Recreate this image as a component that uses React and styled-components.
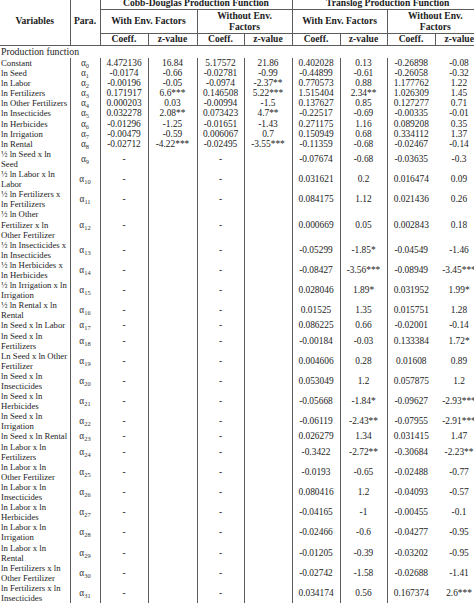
import React from 'react'
import styled, { createGlobalStyle } from 'styled-components'

const GlobalStyle = createGlobalStyle`
  html, body {
    margin: 0;
    padding: 0;
    background: #fff;
  }
  body {
    font-family: "Liberation Serif", "Times New Roman", serif;
    color: #1c1c1c;
  }
`

const LINE = '#5c5c5c'
// column widths, left to right (the last one runs past the window)
const COLS = [70, 30, 48, 49, 47, 48, 48, 47, 48, 48]

const Frame = styled.div`
  width: 474px;
  height: 603px;
  overflow: hidden;
`

const Table = styled.table`
  border-collapse: collapse;
  table-layout: fixed;
  width: ${COLS.reduce((a, b) => a + b, 0)}px;
  margin-top: -2px;
  font-size: 9.4px;
  line-height: 10.1px;
`

const HeadCell = styled.th`
  font-weight: bold;
  font-size: 9.6px;
  text-align: center;
  vertical-align: middle;
  padding: 0;
  height: ${(p) => p.$h || 10}px;
  border-left: ${(p) => (p.$noLeft ? 'none' : `1px solid ${LINE}`)};
  border-bottom: 1px solid ${LINE};
  white-space: nowrap;
`

const SectionCell = styled.td`
  text-align: left;
  padding: 1px 0 0 1px;
  height: 11px;
  font-size: 9.8px;
  vertical-align: middle;
`

const VarCell = styled.td`
  text-align: left;
  padding: 0 0 0 1px;
  font-size: 8.7px;
  vertical-align: middle;
  white-space: nowrap;
`

const ParaCell = styled.td`
  text-align: center;
  vertical-align: middle;
  padding: 0;
  border-left: 1px solid ${LINE};
  color: #333;
`

const Sub = styled.sub`
  font-size: 6.4px;
  vertical-align: -2px;
  line-height: 0;
`

const NumCell = styled.td`
  text-align: center;
  vertical-align: middle;
  padding: 0;
  white-space: nowrap;
  border-left: ${(p) => (p.$noLeft ? 'none' : `1px solid ${LINE}`)};
`

const single = [
  ['ln Seed', 1, ['-0.0174', '-0.66', '-0.02781', '-0.99', '-0.44899', '-0.61', '-0.26058', '-0.32']],
  ['ln Labor', 2, ['-0.00196', '-0.05', '-0.0974', '-2.37**', '0.770573', '0.88', '1.177762', '1.22']],
  ['ln Fertilizers', 3, ['0.171917', '6.6***', '0.146508', '5.22***', '1.515404', '2.34**', '1.026309', '1.45']],
  ['ln Other Fertilizers', 4, ['0.000203', '0.03', '-0.00994', '-1.5', '0.137627', '0.85', '0.127277', '0.71']],
  ['ln Insecticides', 5, ['0.032278', '2.08**', '0.073423', '4.7**', '-0.22517', '-0.69', '-0.00335', '-0.01']],
  ['ln Herbicides', 6, ['-0.01296', '-1.25', '-0.01651', '-1.43', '0.271175', '1.16', '0.089208', '0.35']],
  ['ln Irrigation', 7, ['-0.00479', '-0.59', '0.006067', '0.7', '0.150949', '0.68', '0.334112', '1.37']],
  ['ln Rental', 8, ['-0.02712', '-4.22***', '-0.02495', '-3.55***', '-0.11359', '-0.68', '-0.02467', '-0.14']],
]

const translogOnly = [
  [['½ ln Seed x ln', 'Seed'], 9, ['-0.07674', '-0.68', '-0.03635', '-0.3']],
  [['½ ln Labor x ln', 'Labor'], 10, ['0.031621', '0.2', '0.016474', '0.09']],
  [['½ ln Fertilizers x', 'ln Fertilizers'], 11, ['0.084175', '1.12', '0.021436', '0.26']],
  [['½ ln Other', 'Fertilizer x ln', 'Other Fertilizer'], 12, ['0.000669', '0.05', '0.002843', '0.18']],
  [['½ ln Insecticides x', 'ln Insecticides'], 13, ['-0.05299', '-1.85*', '-0.04549', '-1.46']],
  [['½ ln Herbicides x', 'ln Herbicides'], 14, ['-0.08427', '-3.56***', '-0.08949', '-3.45***']],
  [['½ ln Irrigation x ln', 'Irrigation'], 15, ['0.028046', '1.89*', '0.031952', '1.99*']],
  [['½ ln Rental x ln', 'Rental'], 16, ['0.01525', '1.35', '0.015751', '1.28']],
  [['ln Seed x ln Labor'], 17, ['0.086225', '0.66', '-0.02001', '-0.14']],
  [['ln Seed x ln', 'Fertilizers'], 18, ['-0.00184', '-0.03', '0.133384', '1.72*']],
  [['Ln Seed x ln Other', 'Fertilizer'], 19, ['0.004606', '0.28', '0.01608', '0.89']],
  [['ln Seed x ln', 'Insecticides'], 20, ['0.053049', '1.2', '0.057875', '1.2']],
  [['ln Seed x ln', 'Herbicides'], 21, ['-0.05668', '-1.84*', '-0.09627', '-2.93***']],
  [['ln Seed x ln', 'Irrigation'], 22, ['-0.06119', '-2.43**', '-0.07955', '-2.91***']],
  [['ln Seed x ln Rental'], 23, ['0.026279', '1.34', '0.031415', '1.47']],
  [['ln Labor x ln', 'Fertilizers'], 24, ['-0.3422', '-2.72**', '-0.30684', '-2.23**']],
  [['ln Labor x ln', 'Other Fertilizer'], 25, ['-0.0193', '-0.65', '-0.02488', '-0.77']],
  [['ln Labor x ln', 'Insecticides'], 26, ['0.080416', '1.2', '-0.04093', '-0.57']],
  [['ln Labor x ln', 'Herbicides'], 27, ['-0.04165', '-1', '-0.00455', '-0.1']],
  [['ln Labor x ln', 'Irrigation'], 28, ['-0.02466', '-0.6', '-0.04277', '-0.95']],
  [['ln Labor x ln', 'Rental'], 29, ['-0.01205', '-0.39', '-0.03202', '-0.95']],
  [['ln Fertilizers x ln', 'Other Fertilizer'], 30, ['-0.02742', '-1.58', '-0.02688', '-1.41']],
  [['ln Fertilizers x ln', 'Insecticides'], 31, ['0.034174', '0.56', '0.167374', '2.6***']],
]

const Para = ({ n }) => (
  <ParaCell>
    α<Sub>{n}</Sub>
  </ParaCell>
)

const DataRow = ({ label, n, values }) => (
  <tr>
    <VarCell>
      {label.map((line, i) => (
        <React.Fragment key={i}>
          {i > 0 && <br />}
          {line}
        </React.Fragment>
      ))}
    </VarCell>
    <Para n={n} />
    {values.map((v, i) => (
      <NumCell key={i} $noLeft={i === 7}>
        {v}
      </NumCell>
    ))}
  </tr>
)

export default function App() {
  return (
    <Frame>
      <GlobalStyle />
      <Table>
        <colgroup>
          {COLS.map((w, i) => (
            <col key={i} style={{ width: w }} />
          ))}
        </colgroup>
        <thead>
          <tr>
            <HeadCell rowSpan={3} $noLeft>Variables</HeadCell>
            <HeadCell rowSpan={3}>Para.</HeadCell>
            <HeadCell colSpan={4} $h={11}>Cobb-Douglas Production Function</HeadCell>
            <HeadCell colSpan={4} $h={11}>Translog Production Function</HeadCell>
          </tr>
          <tr>
            <HeadCell colSpan={2} $h={23}>With Env. Factors</HeadCell>
            <HeadCell colSpan={2} $h={23}>Without Env.<br />Factors</HeadCell>
            <HeadCell colSpan={2} $h={23}>With Env. Factors</HeadCell>
            <HeadCell colSpan={2} $h={23}>Without Env.<br />Factors</HeadCell>
          </tr>
          <tr>
            {[0, 1, 2, 3].map((k) => (
              <React.Fragment key={k}>
                <HeadCell $h={11}>Coeff.</HeadCell>
                <HeadCell $h={11}>z-value</HeadCell>
              </React.Fragment>
            ))}
          </tr>
        </thead>
        <tbody>
          <tr>
            <SectionCell colSpan={10}>Production function</SectionCell>
          </tr>
          <DataRow
            label={['Constant']}
            n={0}
            values={['4.472136', '16.84', '5.17572', '21.86', '0.402028', '0.13', '-0.26898', '-0.08']}
          />
          {single.map(([label, n, values]) => (
            <DataRow key={n} label={[label]} n={n} values={values} />
          ))}
          {translogOnly.map(([label, n, values]) => (
            <DataRow key={n} label={label} n={n} values={['-', '', '-', '', ...values]} />
          ))}
        </tbody>
      </Table>
    </Frame>
  )
}
